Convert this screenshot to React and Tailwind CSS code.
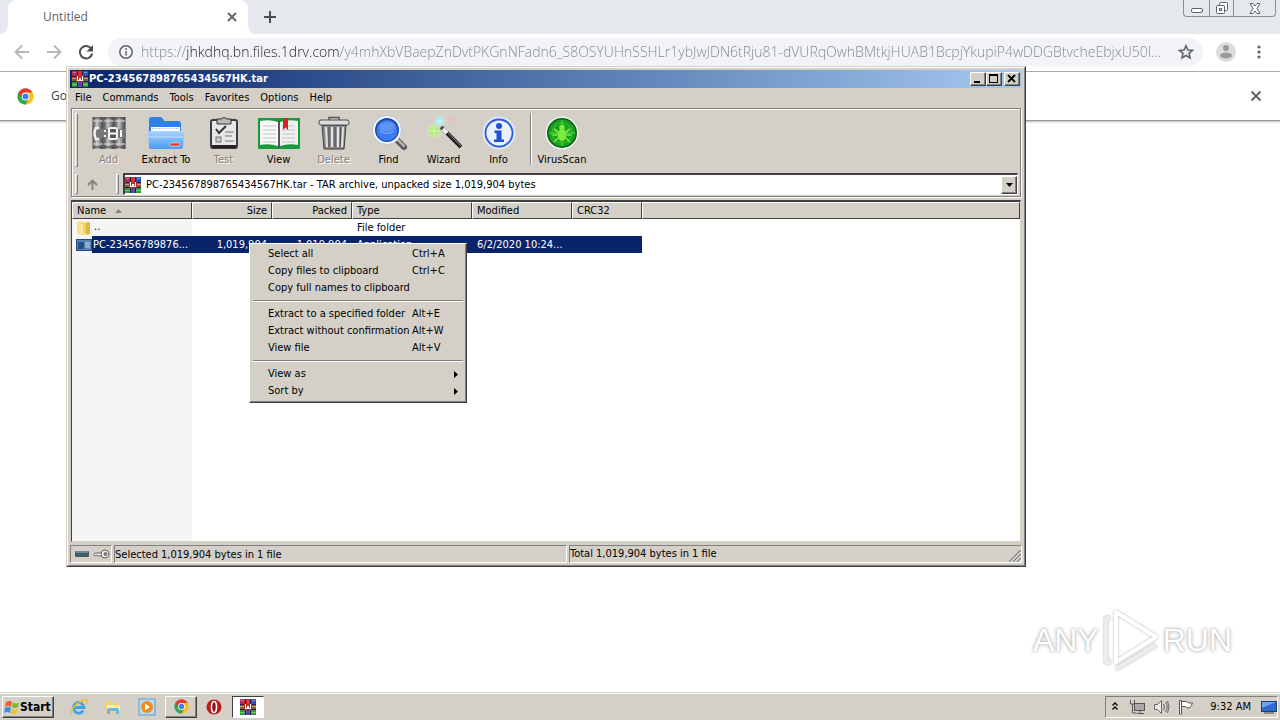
import React from "react";

const ARCHIVE = "PC-234567898765434567HK.tar";
const URL_TEXT =
  "https://jhkdhq.bn.files.1drv.com/y4mhXbVBaepZnDvtPKGnNFadn6_S8OSYUHnSSHLr1ybJwJDN6tRju81-dVURqOwhBMtkjHUAB1BcpjYkupiP4wDDGBtvcheEbjxU50l...";

const RAISED =
  "border border-t-white border-l-white border-r-[#404040] border-b-[#404040] shadow-[inset_-1px_-1px_0_#808080]";
const SUNKEN = "border border-t-[#808080] border-l-[#808080] border-r-white border-b-white";

function RarIcon({ className = "size-4" }) {
  return (
    <svg viewBox="0 0 16 16" className={className + " shrink-0"} shapeRendering="crispEdges" aria-hidden="true">
      <rect width="16" height="16" fill="#2a1c34" />
      <rect x="0" y="0" width="5" height="5" fill="#b02c58" />
      <rect x="6" y="0" width="4" height="5" fill="#d83030" />
      <rect x="11" y="0" width="5" height="5" fill="#2c50c0" />
      <rect x="1" y="1" width="3" height="1" fill="#e87098" />
      <rect x="12" y="1" width="3" height="1" fill="#7098f0" />
      <rect x="0" y="6" width="5" height="4" fill="#8a5a3c" />
      <rect x="11" y="6" width="5" height="4" fill="#8a5a3c" />
      <rect x="0" y="7" width="5" height="1" fill="#c89c6c" />
      <rect x="11" y="7" width="5" height="1" fill="#c89c6c" />
      <rect x="4" y="5" width="8" height="6" fill="#b03030" />
      <rect x="5" y="5" width="1" height="5" fill="#fff" />
      <rect x="10" y="5" width="1" height="5" fill="#fff" />
      <rect x="5" y="9" width="6" height="1" fill="#fff" />
      <rect x="7" y="7" width="2" height="2" fill="#fff" />
      <rect x="0" y="11" width="5" height="5" fill="#2c9c34" />
      <rect x="6" y="11" width="4" height="5" fill="#6440b0" />
      <rect x="11" y="11" width="5" height="5" fill="#2c9c34" />
      <rect x="0" y="13" width="5" height="1" fill="#6cd070" />
      <rect x="11" y="13" width="5" height="1" fill="#6cd070" />
    </svg>
  );
}

function ChromeIcon({ className = "size-4" }) {
  return (
    <svg viewBox="0 0 48 48" className={className + " shrink-0"} aria-hidden="true">
      <path d="M24 24 L4.1 12.5 A23 23 0 0 1 43.9 12.5 Z" fill="#e33b2e" />
      <path d="M24 24 L43.9 12.5 A23 23 0 0 1 24 47 Z" fill="#fbc116" />
      <path d="M24 24 L24 47 A23 23 0 0 1 4.1 12.5 Z" fill="#2da94f" />
      <path d="M24 13 L43.9 12.5 A23 23 0 0 1 46 18 L30 18 Z" fill="#fbc116" />
      <path d="M14 29 L4.1 12.5 L20 14 Z" fill="#e33b2e" />
      <path d="M33 30 L24 47 L20 33 Z" fill="#2da94f" />
      <circle cx="24" cy="24" r="11" fill="#fff" />
      <circle cx="24" cy="24" r="8.5" fill="#3d7eea" />
    </svg>
  );
}

function AddIcon() {
  return (
    <svg viewBox="0 0 34 34" className="size-[34px]">
      <defs>
        <linearGradient id="book" x1="0" x2="1">
          <stop offset="0" stopColor="#4a4a4a" />
          <stop offset="0.4" stopColor="#c4c4c4" />
          <stop offset="1" stopColor="#3a3a3a" />
        </linearGradient>
      </defs>
      {[0, 11, 22].map((x) => (
        <g key={x}>
          <rect x={x + 0.5} y="1" width="11" height="32" fill="url(#book)" />
          <path d={`M${x + 1} 5h10M${x + 1} 28h10`} stroke="#ddd" />
          <path d={`M${x + 1} 2h10M${x + 1} 31h10`} stroke="#444" />
        </g>
      ))}
      <rect y="13" width="34" height="9" fill="#777" />
      <path d="M7 12H4q-3 5 0 11h3" fill="none" stroke="#f0f0f0" strokeWidth="2.500" />
      <path d="M13 14v2M13 19v2" stroke="#f0f0f0" strokeWidth="2" />
      <rect x="17" y="12" width="8" height="11" rx="2" fill="#555" stroke="#f4f4f4" strokeWidth="2" />
      <path d="M18 17.500h6M29 14v7" stroke="#fff" strokeWidth="2" />
    </svg>
  );
}

function ExtractIcon() {
  return (
    <svg viewBox="0 0 38 34" className="h-[34px] w-[38px]">
      <defs>
        <linearGradient id="fold" x1="0" x2="0" y1="0" y2="1">
          <stop offset="0" stopColor="#a8d4ff" />
          <stop offset="1" stopColor="#4a9cf2" />
        </linearGradient>
      </defs>
      <path d="M2 9V4q0-3 3-3h8q2 0 3 2l1 2h14q3 0 3 3v8H2z" fill="#2d7fea" />
      <path d="M4 11h29v10H4z" fill="#fff" />
      <path d="M5 12.500h27" stroke="#bcd" strokeDasharray="2 1" />
      <path d="M1 17q0-2 2-2h32q2 0 2 2l-1 14q0 2-2 2H4q-2 0-2-2z" fill="url(#fold)" />
      <path d="M1.500 21h35" stroke="#c8e4ff" />
      <rect x="23" y="27" width="10" height="3" rx="1" fill="#e04030" stroke="#fff" strokeWidth=".5" />
    </svg>
  );
}

function TestIcon() {
  return (
    <svg viewBox="0 0 34 34" className="size-[34px]">
      <rect x="4" y="4" width="26" height="28" rx="2" fill="#e8e8e8" stroke="#3c3c3c" strokeWidth="2" />
      <rect x="5" y="29" width="24" height="3" fill="#222" />
      <path d="M10 3h4q3-3 6 0h4v5H10z" fill="#bbb" stroke="#333" />
      <path d="M9 13l3 4 7-7" fill="none" stroke="#333" strokeWidth="2" />
      <path d="M18 16h9M18 20h7M18 25h9" stroke="#999" strokeWidth="1.500" />
      <rect x="9" y="21" width="5" height="5" fill="#ccc" stroke="#777" />
    </svg>
  );
}

function ViewIcon() {
  return (
    <svg viewBox="0 0 42 34" className="h-[34px] w-[42px]">
      <rect x="0" y="2" width="42" height="31" rx="1" fill="#159a3c" />
      <path d="M2 5q10-2 18 1v24q-9-3-18-1z" fill="#f8f8f8" />
      <path d="M40 5q-10-2-18 1v24q9-3 18-1z" fill="#f1f1f1" />
      <path d="M5 10h13M5 14h13M5 18h13M5 22h13M5 26h13M24 10h13M24 14h13M24 18h13M24 22h13M24 26h13" stroke="#c2c2c2" />
      <path d="M21 5v27" stroke="#555" strokeWidth="2" />
      <path d="M25 2h5v12l-2.500-2.500L25 14z" fill="#d2232a" />
    </svg>
  );
}

function DeleteIcon() {
  return (
    <svg viewBox="0 0 34 34" className="size-[34px]">
      <path d="M5 9h24l-2 24H7z" fill="#8c8c8c" stroke="#3a3a3a" />
      <path d="M9 11l1 20M15 11v20M21 11v20M26 11l-1 20" stroke="#e4e4e4" strokeWidth="2" />
      <path d="M12 11v20M18 11v20M24 11l-1 20" stroke="#444" />
      <rect x="2" y="4" width="30" height="5" rx="2" fill="#ddd" stroke="#4a4a4a" />
      <path d="M12 4V1.500h10V4" fill="none" stroke="#555" strokeWidth="1.500" />
    </svg>
  );
}

function FindIcon() {
  return (
    <svg viewBox="0 0 36 36" className="size-9">
      <path d="M25 24l8 8" stroke="#555" strokeWidth="6" strokeLinecap="round" />
      <path d="M25 23l8 8" stroke="#b4b4b4" strokeWidth="2.500" strokeLinecap="round" />
      <circle cx="16" cy="15" r="14.500" fill="#f4f8ff" stroke="#a8bcd8" strokeWidth=".8" />
      <circle cx="16" cy="15" r="12" fill="#1c48a8" />
      <circle cx="16" cy="15.500" r="10.500" fill="#3c7cf0" />
      <ellipse cx="16" cy="12" rx="8" ry="5" fill="#5c94f4" />
      <path d="M9 16q7 5 14 0" fill="none" stroke="#8ab8ff" />
    </svg>
  );
}

function WizardIcon() {
  return (
    <svg viewBox="0 0 36 36" className="size-9">
      <defs>
        <radialGradient id="cyan">
          <stop offset="0" stopColor="#5cd8f0" />
          <stop offset="0.5" stopColor="#a8ecf4" />
          <stop offset="1" stopColor="#d8f0f0" stopOpacity="0" />
        </radialGradient>
        <radialGradient id="lime">
          <stop offset="0" stopColor="#8ce83c" />
          <stop offset="0.5" stopColor="#b4f080" />
          <stop offset="1" stopColor="#dcf4c0" stopOpacity="0" />
        </radialGradient>
      </defs>
      <circle cx="14" cy="6" r="6" fill="url(#cyan)" />
      <path d="M14 3v6M11 6h6" stroke="#e8feff" />
      <circle cx="8" cy="16" r="8" fill="url(#lime)" />
      <path d="M8 12v8M4 16h8" stroke="#f0ffdc" />
      <circle cx="25" cy="4.500" r="2.500" fill="#f0b8b8" opacity=".8" />
      <path d="M17 14l18 18" stroke="#222" strokeWidth="4" />
      <path d="M17 13l18 18" stroke="#8c8c8c" />
      <path d="M16 13l5 5" stroke="#f0f0f0" strokeWidth="4" />
      <path d="M15 12l2 2" stroke="#555" strokeWidth="4" />
    </svg>
  );
}

function InfoIcon() {
  return (
    <svg viewBox="0 0 34 34" className="size-[34px]">
      <circle cx="17" cy="17" r="16.500" fill="#dfe7f8" />
      <circle cx="17" cy="17" r="13.500" fill="#e9f0ff" stroke="#2a5cd8" strokeWidth="1.800" />
      <circle cx="17" cy="10" r="3" fill="#1e50d0" />
      <path d="M12.500 14.500h7v9H22V26H12v-2.500h2.500V17h-2z" fill="#1e50d0" />
    </svg>
  );
}

function VirusIcon() {
  return (
    <svg viewBox="0 0 34 34" className="size-[34px]">
      <circle cx="17" cy="17" r="16.500" fill="#eef4ee" />
      <circle cx="17" cy="17" r="15" fill="#0c5c14" />
      <circle cx="17" cy="17" r="13.500" fill="#18a020" />
      <path d="M17 4v26M4 17h26" stroke="#5ce048" />
      <circle cx="17" cy="17" r="10" fill="none" stroke="#3cc830" />
      <ellipse cx="17" cy="19" rx="4.500" ry="6" fill="#7cec3c" />
      <circle cx="17" cy="11.500" r="2.800" fill="#7cec3c" />
      <path d="M13 16l-4-3M21 16l4-3M12.500 19H8M21.500 19H26M13 22l-4 4M21 22l4 4" stroke="#7cec3c" strokeWidth="1.600" />
    </svg>
  );
}

const TOOLS = [
  { label: "Add", Icon: AddIcon, disabled: true, width: "w-[55px]" },
  { label: "Extract To", Icon: ExtractIcon, width: "w-[60px]" },
  { label: "Test", Icon: TestIcon, disabled: true, width: "w-[55px]" },
  { label: "View", Icon: ViewIcon, width: "w-[55px]" },
  { label: "Delete", Icon: DeleteIcon, disabled: true, width: "w-[55px]" },
  { label: "Find", Icon: FindIcon, width: "w-[55px]" },
  { label: "Wizard", Icon: WizardIcon, width: "w-[55px]" },
  { label: "Info", Icon: InfoIcon, width: "w-[55px]" },
];

function ToolButton({ label, Icon, disabled, width }) {
  return (
    <button disabled={disabled} className={"flex shrink-0 flex-col items-center gap-px pt-[2px] whitespace-nowrap " + width}>
      <span className="flex h-9 items-center justify-center">
        <Icon />
      </span>
      <span className={"leading-4 " + (disabled ? "text-[#808080] [text-shadow:1px_1px_0_#fff]" : "text-black")}>
        {label}
      </span>
    </button>
  );
}

function Grip({ className = "" }) {
  return <span className={"w-[3px] shrink-0 border border-t-white border-l-white border-r-[#808080] border-b-[#808080] " + className} />;
}

function CaptionButton({ label, children }) {
  return (
    <button aria-label={label} className={"flex h-[14px] w-4 items-center justify-center bg-[#d4d0c8] " + RAISED}>
      <svg viewBox="0 0 12 10" className="h-[10px] w-3" shapeRendering="crispEdges" fill="none" stroke="#000">
        {children}
      </svg>
    </button>
  );
}

const MENU = [
  [
    ["Select all", "Ctrl+A"],
    ["Copy files to clipboard", "Ctrl+C"],
    ["Copy full names to clipboard", ""],
  ],
  [
    ["Extract to a specified folder", "Alt+E"],
    ["Extract without confirmation", "Alt+W"],
    ["View file", "Alt+V"],
  ],
  [
    ["View as", ">"],
    ["Sort by", ">"],
  ],
];

function ContextMenu() {
  return (
    <div role="menu" className={"absolute top-[176px] left-[182px] w-[218px] bg-[#d4d0c8] p-[2px] " + RAISED}>
      {MENU.map((group, g) => (
        <div key={g}>
          {g > 0 && <hr className="mx-px mt-[3px] mb-1 border-t border-b border-t-[#808080] border-b-white" />}
          {group.map(([label, key]) => (
            <button key={label} role="menuitem" className="flex h-[17px] w-full items-center pl-4 text-left whitespace-nowrap">
              <span className="w-36">{label}</span>
              {key === ">" ? (
                <svg viewBox="0 0 4 7" className="mr-[6px] ml-auto h-[7px] w-1">
                  <path d="M0 0l4 3.500-4 3.500z" />
                </svg>
              ) : (
                <span>{key}</span>
              )}
            </button>
          ))}
        </div>
      ))}
    </div>
  );
}

const TH = "h-[17px] border border-t-white border-l-white border-r-[#404040] border-b-[#404040] bg-[#d4d0c8] px-1 font-normal leading-[15px]";
const TD_SELECTED = "bg-[#0a246a] px-[5px] pt-px leading-4";

function FileList() {
  return (
    <div className="h-[342px] overflow-hidden border border-t-2 border-t-[#404040] border-l-[#404040] border-r-[#d4d0c8] border-b-[#d4d0c8] bg-[linear-gradient(to_right,#f5f5f5_120px,#ffffff_120px)]">
      <table className="w-full table-fixed border-separate border-spacing-0 whitespace-nowrap">
        <colgroup>
          <col className="w-[120px]" />
          <col className="w-20" />
          <col className="w-20" />
          <col className="w-[120px]" />
          <col className="w-[100px]" />
          <col className="w-[70px]" />
          <col />
        </colgroup>
        <thead>
          <tr>
            <th className={TH + " text-left"}>
              Name
              <svg viewBox="0 0 7 4" className="ml-[9px] inline h-1 w-[7px]">
                <path d="M0 4l3.500-4L7 4z" fill="#808080" />
              </svg>
            </th>
            <th className={TH + " text-right"}>Size</th>
            <th className={TH + " text-right"}>Packed</th>
            <th className={TH + " text-left"}>Type</th>
            <th className={TH + " text-left"}>Modified</th>
            <th className={TH + " text-left"}>CRC32</th>
            <th className={TH} aria-label="Spare" />
          </tr>
        </thead>
        <tbody>
          <tr className="h-[17px]">
            <td>
              <div className="flex h-[17px] items-center pl-1">
                <svg viewBox="0 0 16 16" className="size-4 shrink-0">
                  <path d="M1 2l5-1 2 2v12l-7-1z" fill="#f7e28a" />
                  <path d="M5 3l7-1v11l-7 2z" fill="#f2d25c" />
                  <path d="M10 3l4-1v12l-4 1z" fill="#e0b63c" />
                  <path d="M6 4v10" stroke="#fff6c8" strokeWidth="1.500" />
                </svg>
                <span className="pl-[2px]">..</span>
              </div>
            </td>
            <td />
            <td />
            <td className="px-[5px] pt-px leading-4">File folder</td>
            <td />
            <td />
            <td />
          </tr>
          <tr className="h-[17px] text-white">
            <td>
              <div className="flex h-[17px] items-center pl-1">
                <svg viewBox="0 0 16 16" className="size-4 shrink-0">
                  <rect x=".5" y="2.500" width="15" height="11" fill="#5a80b4" stroke="#2a4878" />
                  <rect x="2" y="5" width="6" height="7" fill="#24508c" />
                  <path d="M9 6h5M9 8h5M9 10h5" stroke="#c0d4ec" />
                </svg>
                <span className="h-[17px] flex-1 bg-[#0a246a] pt-px pl-px leading-4">PC-23456789876...</span>
              </div>
            </td>
            <td className={TD_SELECTED + " text-right"}>1,019,904</td>
            <td className={TD_SELECTED + " text-right"}>1,019,904</td>
            <td className={TD_SELECTED}>Application</td>
            <td className={TD_SELECTED}>6/2/2020 10:24...</td>
            <td className={TD_SELECTED} />
            <td />
          </tr>
        </tbody>
      </table>
    </div>
  );
}

function ArchiveWindow() {
  return (
    <section
      aria-label={ARCHIVE}
      className="absolute top-[66px] left-[66px] w-[960px] border border-t-[#d4d0c8] border-l-[#d4d0c8] border-r-[#404040] border-b-[#404040] bg-[#d4d0c8] font-['DejaVu_Sans_Condensed','Liberation_Sans',sans-serif] text-[11px] text-black"
    >
      <div className="border border-t-white border-l-white border-r-[#808080] border-b-[#808080] p-[2px]">
        <header className="flex h-[18px] items-center bg-linear-to-r from-[#0a246a] to-[#a6caf0] px-[2px]">
          <RarIcon />
          <h1 className="flex-1 pt-px pl-px font-bold text-white">{ARCHIVE}</h1>
          <CaptionButton label="Minimize">
            <path d="M2 8h6" strokeWidth="2" />
          </CaptionButton>
          <CaptionButton label="Maximize">
            <path d="M1.500 1v8M1 8.500h9M9.500 1v8" />
            <path d="M1 1h9" strokeWidth="2" />
          </CaptionButton>
          <span className="w-[2px]" />
          <CaptionButton label="Close">
            <path d="M2 1l7 7M9 1l-7 7" strokeWidth="1.800" shapeRendering="auto" />
          </CaptionButton>
        </header>
        <nav className="flex h-5 items-center gap-[11px] pt-px pl-[5px]">
          {["File", "Commands", "Tools", "Favorites", "Options", "Help"].map((m) => (
            <button key={m}>{m}</button>
          ))}
        </nav>
        <div className="mx-px border border-[#808080] shadow-[inset_1px_1px_0_#fff,1px_1px_0_#fff]">
          <div className="flex h-[63px] items-start py-1 pl-[3px]">
            <Grip className="mr-[3px] h-[54px]" />
            {TOOLS.map((t) => (
              <ToolButton key={t.label} {...t} />
            ))}
            <span className="ml-1 h-[52px] w-[2px] shrink-0 border-r border-l border-r-white border-l-[#808080]" />
            <ToolButton label="VirusScan" Icon={VirusIcon} width="w-[60px]" />
          </div>
          <div className="flex h-6 items-center pr-[2px] pl-[3px]">
            <Grip className="h-5" />
            <button aria-label="Up one level" className="ml-[6px] flex w-4 justify-center">
              <svg viewBox="0 0 11 11" className="size-[11px]" fill="none" stroke="#808080" strokeWidth="1.800">
                <path d="M5.500 11V1.500M1 6l4.500-4.500L10 6" />
              </svg>
            </button>
            <Grip className="mr-1 ml-4 h-5" />
            <div className="flex h-[22px] flex-1 items-center border border-t-2 border-l-2 border-t-[#404040] border-l-[#404040] border-r-white border-b-white bg-white">
              <RarIcon />
              <select
                aria-label="Address"
                className="h-[19px] flex-1 appearance-none bg-white pt-px pl-[5px] text-black outline-none"
                defaultValue="archive"
              >
                <option value="archive">{ARCHIVE} - TAR archive, unpacked size 1,019,904 bytes</option>
              </select>
              <span className={"flex h-[18px] w-4 items-center justify-center bg-[#d4d0c8] " + RAISED}>
                <svg viewBox="0 0 7 4" className="h-1 w-[7px]">
                  <path d="M0 0h7L3.500 4z" />
                </svg>
              </span>
            </div>
          </div>
        </div>
        <div className="mx-px mt-[3px]">
          <FileList />
        </div>
        <footer className="mt-[3px] flex h-[18px] items-stretch gap-[2px] leading-4">
          <span className={"flex w-[42px] items-center gap-1 pl-1 " + SUNKEN}>
            <svg viewBox="0 0 14 6" className="h-[6px] w-[14px]">
              <rect width="14" height="6" rx="1" fill="#445c68" />
              <path d="M1 1h12" stroke="#a4b8c0" />
            </svg>
            <svg viewBox="0 0 17 10" className="h-[10px] w-[17px]" fill="#eee" stroke="#666">
              <path d="M9 4H2L.5 5.500 2 7l2-1 1 1h4z" />
              <circle cx="12" cy="5" r="4" />
              <circle cx="12.500" cy="5" r="1.500" fill="#888" />
            </svg>
          </span>
          <span className={"w-[453px] pt-px " + SUNKEN}>Selected 1,019,904 bytes in 1 file</span>
          <span className={"flex flex-1 items-end justify-between " + SUNKEN}>
            <span>Total 1,019,904 bytes in 1 file</span>
            <svg viewBox="0 0 12 12" className="size-3" stroke="#808080" strokeWidth="1.500">
              <path d="M0 12L12 0M4 12l8-8M8 12l4-4" />
              <path d="M1.500 12L12 1.500M5.500 12L12 5.500M9.500 12L12 9.500" stroke="#fff" strokeWidth=".7" />
            </svg>
          </span>
        </footer>
      </div>
      <ContextMenu />
    </section>
  );
}

function Browser() {
  return (
    <main className="flex flex-1 flex-col bg-white font-['Open_Sans','Noto_Sans',sans-serif]">
      <div className="flex h-[34px] justify-between bg-[#e5e9ed]">
        <div className="flex">
          <div className="h-full w-2 bg-white">
            <div className="h-full w-full rounded-br-lg bg-[#e5e9ed]" />
          </div>
          <div className="flex w-60 items-center justify-between rounded-t-lg bg-white pr-[10px] pl-[35px] text-xs text-[#5f6368]">
            <span>Untitled</span>
            <button aria-label="Close tab">
              <svg viewBox="0 0 12 12" className="size-3" stroke="#5f6368" strokeWidth="1.800">
                <path d="M2 2l8 8M10 2l-8 8" />
              </svg>
            </button>
          </div>
          <div className="h-full w-2 bg-white">
            <div className="h-full w-full rounded-bl-lg bg-[#e5e9ed]" />
          </div>
          <button aria-label="New tab" className="ml-[7px]">
            <svg viewBox="0 0 14 14" className="size-[14px]" stroke="#4b4f54" strokeWidth="2">
              <path d="M7 1v12M1 7h12" />
            </svg>
          </button>
        </div>
        <div className="mr-1 flex h-[17px] rounded-b border border-t-0 border-[#8b9096] text-[#5f6368]">
          <button aria-label="Minimize browser" className="flex w-[25px] items-end justify-center pb-[3px]">
            <svg viewBox="0 0 12 5" className="h-[5px] w-3" fill="#fff" stroke="#5f6368">
              <rect x=".5" y=".5" width="11" height="4" rx="1.500" />
            </svg>
          </button>
          <button aria-label="Restore browser" className="flex w-[25px] items-center justify-center border-x border-[#8b9096]">
            <svg viewBox="0 0 14 13" className="h-[13px] w-[14px]" fill="#fff" stroke="#5f6368">
              <rect x="4.500" y=".5" width="8" height="8" rx="1" />
              <rect x="1.500" y="3.500" width="8" height="8" rx="1" />
              <rect x="4.500" y="6.500" width="2" height="2" />
            </svg>
          </button>
          <button aria-label="Close browser" className="flex w-[41px] items-center justify-center">
            <svg viewBox="0 0 12 11" className="h-[11px] w-3" fill="#fff" stroke="#5f6368">
              <path d="M1 .5h3l2 2.500 2-2.500h3L8 5.500l3 5H8L6 8l-2 2.500H1l3-5z" />
            </svg>
          </button>
        </div>
      </div>

      <div className="flex h-[38px] items-center border-b border-[#a9a9a9] bg-white px-[14px] pb-px">
        <button aria-label="Back" className="w-8">
          <svg viewBox="0 0 16 16" className="size-4" fill="none" stroke="#b4b7ba" strokeWidth="1.800">
            <path d="M15 8H2M8 1.500L1.500 8 8 14.500" />
          </svg>
        </button>
        <button aria-label="Forward" className="w-8">
          <svg viewBox="0 0 16 16" className="size-4" fill="none" stroke="#b4b7ba" strokeWidth="1.800">
            <path d="M1 8h13M8 1.500L14.500 8 8 14.500" />
          </svg>
        </button>
        <button aria-label="Reload" className="w-[30px]">
          <svg viewBox="0 0 16 16" className="size-4" fill="none" stroke="#4b4f54" strokeWidth="2">
            <path d="M13.300 4.800A6.200 6.200 0 1 0 14.200 9.500" />
            <path d="M15 1v6.500H8.500z" fill="#4b4f54" stroke="none" />
          </svg>
        </button>
        <div className="flex h-7 flex-1 items-center rounded-full bg-[#f1f3f6] pr-[9px] pl-[11px]">
          <svg viewBox="0 0 14 14" className="size-[14px] shrink-0" fill="none" stroke="#5f6368" strokeWidth="1.500">
            <circle cx="7" cy="7" r="6.200" />
            <path d="M7 6v4.500M7 3.300v1.600" />
          </svg>
          <input
            aria-label="Address and search bar"
            readOnly
            value={URL_TEXT}
            className="ml-2 min-w-0 flex-1 bg-[linear-gradient(to_right,#80868b_45px,#202124_45px,#202124_199px,#80868b_199px)] bg-clip-text text-sm font-light text-transparent outline-none"
          />
          <button aria-label="Bookmark">
            <svg viewBox="0 0 16 16" className="size-4" fill="none" stroke="#5f6368" strokeWidth="1.600">
              <path d="M8 1.800l1.900 4.200 4.600.4-3.500 3 1.100 4.500L8 11.500l-4.100 2.400L5 9.400 1.500 6.400l4.600-.4z" />
            </svg>
          </button>
        </div>
        <button aria-label="Profile" className="ml-[13px]">
          <svg viewBox="0 0 20 20" className="size-5" fill="#999">
            <circle cx="10" cy="10" r="10" fill="#dcdcdc" />
            <circle cx="10" cy="6" r="3" />
            <ellipse cx="10" cy="13.500" rx="6" ry="3" />
          </svg>
        </button>
        <button aria-label="Browser menu" className="ml-4">
          <svg viewBox="0 0 14 14" className="size-[14px]" fill="#5f6368">
            <circle cx="7" cy="2" r="1.600" />
            <circle cx="7" cy="7" r="1.600" />
            <circle cx="7" cy="12" r="1.600" />
          </svg>
        </button>
      </div>

      <div className="flex h-[49px] items-center border-b border-[#999] bg-white pr-[18px] pl-[17px] text-xs text-[#3c4043] shadow-[0_1px_2px_#bbb]">
        <ChromeIcon className="size-[17px]" />
        <span className="flex-1 pl-[17px]">Go</span>
        <button aria-label="Dismiss">
          <svg viewBox="0 0 12 12" className="size-3" stroke="#5f6368" strokeWidth="2">
            <path d="M1.500 1.500l9 9M10.500 1.500l-9 9" />
          </svg>
        </button>
      </div>

      <div className="flex flex-1 items-end justify-end pr-12 pb-5">
        <div className="flex items-center gap-[3px] font-['Liberation_Sans',sans-serif] text-[32px] leading-none text-white [text-shadow:0_0_2px_#aaa,0_0_4px_#bbb]">
          <span>ANY</span>
          <svg viewBox="0 0 58 64" className="h-16 w-[58px] drop-shadow-[0_0_1px_#aaa]" fill="none" strokeWidth="4" strokeLinejoin="round">
            <path d="M8 10H4v44h5M14 61l40-24" stroke="#ececec" />
            <path d="M14 4L54 29 14 54z" stroke="#fff" />
          </svg>
          <span>RUN</span>
        </div>
      </div>
    </main>
  );
}

function Taskbar() {
  return (
    <footer className="flex h-7 items-center border-t border-[#d4d0c8] bg-[#d4d0c8] px-[2px] font-['DejaVu_Sans_Condensed','Liberation_Sans',sans-serif] text-[11px] text-black shadow-[inset_0_1px_0_#fff]">
      <button className={"flex h-[22px] w-[52px] items-center pl-px text-xs font-bold " + RAISED}>
        <svg viewBox="0 0 16 16" className="size-4 shrink-0">
          <path d="M2 3q3-2 6 0L7 8Q4 6 1 8z" fill="#f0602c" />
          <path d="M9 3.500q3 2 6 0L14 8q-3 2-6 0z" fill="#7cb82c" />
          <path d="M1 9q3-2 6 0l-1 5q-3-2-6 0z" fill="#3c8ce0" />
          <path d="M8 9.500q3 2 6 0l-1 4.500q-3 2-6 0z" fill="#f8c02c" />
        </svg>
        Start
      </button>
      <button aria-label="Internet Explorer" className="ml-4">
        <svg viewBox="0 0 18 18" className="size-[18px]" fill="none">
          <path d="M4.500 9.500h9.500A5.300 5.300 0 1 0 13.300 12.500" stroke="#3ca4e4" strokeWidth="2.800" />
          <path d="M2 16Q-1 12 7 6q7-5 9.500-4 1.500 1 0 3" stroke="#f0c030" strokeWidth="1.500" />
        </svg>
      </button>
      <button aria-label="File Explorer" className="ml-4">
        <svg viewBox="0 0 18 18" className="size-[18px]">
          <path d="M2 3h5l1 2h8v10H2z" fill="#f0d070" />
          <path d="M3 7h13v6H3z" fill="#fbeeb0" />
          <path d="M3 16v-4q0-2 2-2h8q2 0 2 2v4h-3v-3H6v3z" fill="#6cb4e4" />
        </svg>
      </button>
      <button aria-label="Media Player" className="ml-4">
        <svg viewBox="0 0 18 18" className="size-[18px]">
          <rect x="1" y="1" width="16" height="16" fill="#b8dcf4" stroke="#5c9ccc" />
          <circle cx="9" cy="9" r="6" fill="#f48c1c" />
          <path d="M7 5.500l5 3.500-5 3.500z" fill="#fff" />
        </svg>
      </button>
      <button aria-label="Google Chrome" className={"ml-[9px] flex h-[22px] w-8 items-center justify-center " + RAISED}>
        <ChromeIcon className="size-[15px]" />
      </button>
      <button aria-label="Opera" className="ml-[9px]">
        <svg viewBox="0 0 16 16" className="size-4">
          <circle cx="8" cy="8" r="7.500" fill="#b81c1c" />
          <ellipse cx="8" cy="8" rx="2.500" ry="5.500" fill="#8c1010" stroke="#fff" strokeWidth="1.600" />
        </svg>
      </button>
      <button
        aria-label="WinRAR"
        className="ml-[10px] flex h-[22px] w-8 items-center justify-center border border-t-[#404040] border-l-[#404040] border-r-white border-b-white bg-white"
      >
        <RarIcon />
      </button>
      <div className={"ml-auto flex h-[22px] items-center pl-[6px] " + SUNKEN}>
        <svg viewBox="0 0 6 9" className="h-[9px] w-[6px]" fill="none" stroke="#000" strokeWidth="1.300">
          <path d="M.5 3.500L3 1l2.500 2.500M.5 7.500L3 5l2.500 2.500" />
        </svg>
        <svg viewBox="0 0 17 16" className="ml-[11px] h-4 w-[17px]" fill="#eee" stroke="#555">
          <rect x="5.500" y="4.500" width="10" height="7" fill="#aaa" />
          <path d="M1.500 1v4h4V1M3.500 5v9h4M8 14.500h7M11 12v2" fill="none" />
        </svg>
        <svg viewBox="0 0 17 16" className="ml-[7px] h-4 w-[17px]" fill="#eee" stroke="#666">
          <path d="M1.500 5.500h3l4-4v13l-4-4h-3z" />
          <path d="M10.500 5q2 3 0 6M12.500 3q3.500 5 0 10M14.500 2q3 6 0 12" fill="none" />
        </svg>
        <svg viewBox="0 0 17 16" className="ml-[7px] h-4 w-[17px]" fill="#fff" stroke="#555">
          <path d="M2.500 15V1.500h2V15zM4.500 2.500h5q1 2 6 1.500-1 3-3 5-3 0-4-1.500h-4z" />
        </svg>
        <span className="ml-4 pt-px">9:32 AM</span>
        <button aria-label="Show desktop" className="ml-[10px]">
          <svg viewBox="0 0 16 14" className="h-[14px] w-4">
            <rect x=".5" y="1.500" width="15" height="10" fill="#2c6cd0" stroke="#184078" />
            <path d="M1 2h14L1 8z" fill="#6ca4f0" />
            <path d="M3 13h10" stroke="#444" />
          </svg>
        </button>
      </div>
    </footer>
  );
}

export default function App() {
  return (
    <div className="relative flex min-h-screen flex-col overflow-hidden">
      <Browser />
      <ArchiveWindow />
      <Taskbar />
    </div>
  );
}
